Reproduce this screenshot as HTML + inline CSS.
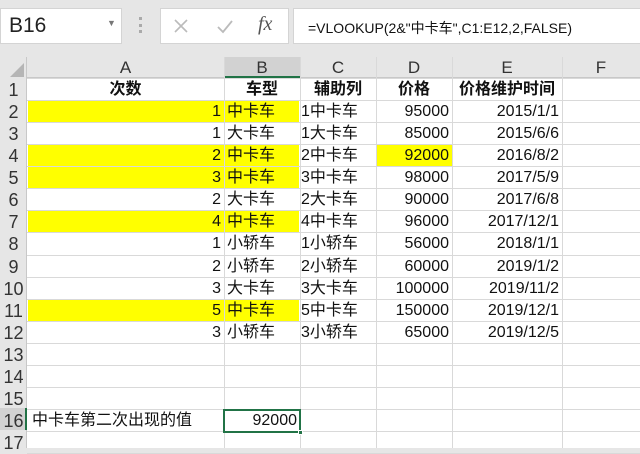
<!DOCTYPE html>
<html><head><meta charset="utf-8"><style>
*{margin:0;padding:0;box-sizing:border-box}
body{width:640px;height:448px;overflow:hidden;background:#e6e6e6;font-family:"Liberation Sans","Noto Sans CJK SC",sans-serif;position:relative}
.box{position:absolute;background:#fff;border:1px solid #d4d4d4}
.cell{position:absolute;height:22px;font-size:16px;line-height:22px;white-space:nowrap;color:#111;padding:0 3px}
.r{text-align:right}.c{text-align:center}
.hl{position:absolute;background:#c8c8c8}
</style></head><body>
<div class="box" style="left:0;top:8px;width:122px;height:36px"><span style="position:absolute;left:8px;top:5px;font-size:21px;color:#222">B16</span><span style="position:absolute;left:106px;top:9px;font-size:9px;color:#777">▼</span></div>
<div style="position:absolute;left:139px;top:17px;width:3px;height:16px;border-left:3px dotted #aaa"></div>
<div class="box" style="left:160px;top:8px;width:129px;height:36px">
<svg style="position:absolute;left:12px;top:9px" width="16" height="16"><path d="M2 2L14 14M14 2L2 14" stroke="#bbb" stroke-width="1.6"/></svg>
<svg style="position:absolute;left:55px;top:9px" width="18" height="16"><path d="M2 9L7 14L16 3" stroke="#bbb" stroke-width="1.8" fill="none"/></svg>
<span style="position:absolute;left:97px;top:4px;font-size:20px;font-style:italic;font-family:'Liberation Serif',serif;color:#555">fx</span></div>
<div class="box" style="left:293px;top:8px;width:360px;height:36px"><span style="position:absolute;left:14px;top:9px;font-size:14px;color:#111">=VLOOKUP(2&amp;"中卡车",C1:E12,2,FALSE)</span></div>
<div style="position:absolute;left:0;top:57px;width:640px;height:391px;background:#fff"></div>
<div style="position:absolute;left:0;top:57px;width:640px;height:21px;background:#e6e6e6;border-bottom:1px solid #c8c8c8"></div>
<div style="position:absolute;left:0;top:57px;width:27px;height:391px;background:#e6e6e6;border-right:1px solid #c8c8c8"></div>
<div style="position:absolute;left:224px;top:57px;width:76px;height:21px;background:#d2d2d2;border-bottom:2px solid #217346"></div>
<div style="position:absolute;left:0;top:408px;width:27px;height:22px;background:#d2d2d2;border-right:2px solid #217346"></div>
<div style="position:absolute;left:10px;top:63px;width:0;height:0;border-left:14px solid transparent;border-bottom:14px solid #b5b5b5"></div>
<div id="g"></div>
<script>
var cols=[[27,224,'A'],[224,300,'B'],[300,376,'C'],[376,452,'D'],[452,562,'E'],[562,640,'F']];
var h='';
var rows=[
['次数','车型','辅助列','价格','价格维护时间'],
['1','中卡车','1中卡车','95000','2015/1/1',1],
['1','大卡车','1大卡车','85000','2015/6/6'],
['2','中卡车','2中卡车','92000','2016/8/2',1,1],
['3','中卡车','3中卡车','98000','2017/5/9',1],
['2','大卡车','2大卡车','90000','2017/6/8'],
['4','中卡车','4中卡车','96000','2017/12/1',1],
['1','小轿车','1小轿车','56000','2018/1/1'],
['2','小轿车','2小轿车','60000','2019/1/2'],
['3','大卡车','3大卡车','100000','2019/11/2'],
['5','中卡车','5中卡车','150000','2019/12/1',1],
['3','小轿车','3小轿车','65000','2019/12/5']];
function rt(i){return 78+i*22.07;}
rows.forEach(function(r,i){var t=rt(i);
 if(r[5]) h+='<div style="position:absolute;left:28px;top:'+(t+1)+'px;width:271px;height:21px;background:#ff0"></div>';
 if(r[6]) h+='<div style="position:absolute;left:377px;top:'+(t+1)+'px;width:75px;height:21px;background:#ff0"></div>';
});
for(var i=0;i<=17;i++){var t=rt(i);h+='<div class="hl" style="left:27px;top:'+t+'px;width:613px;height:1px;background:#d9d9d9"></div>';}
cols.forEach(function(c){h+='<div class="hl" style="left:'+c[1]+'px;top:57px;width:1px;height:391px;background:#d9d9d9"></div>';
 h+='<div class="cell c" style="left:'+c[0]+'px;top:57px;width:'+(c[1]-c[0])+'px;color:#333;font-size:17px">'+c[2]+'</div>';});
for(var i=0;i<17;i++){h+='<div class="cell c" style="left:0;top:'+(rt(i)+1)+'px;width:27px;font-size:18px;color:#333;padding:0">'+(i+1)+'</div>';}
rows.forEach(function(r,i){var t=rt(i)+1;
 if(i==0){[['次数',0],['车型',1],['辅助列',2],['价格',3],['价格维护时间',4]].forEach(function(x){var c=cols[x[1]];h+='<div class="cell c" style="left:'+c[0]+'px;top:'+t+'px;width:'+(c[1]-c[0])+'px;font-weight:bold;padding:0">'+x[0]+'</div>';});return;}
 h+='<div class="cell r" style="left:27px;top:'+t+'px;width:197px">'+r[0]+'</div>';
 h+='<div class="cell" style="left:224px;top:'+t+'px;width:76px">'+r[1]+'</div>';
 h+='<div class="cell" style="left:300px;top:'+t+'px;width:76px;padding-left:1px">'+r[2]+'</div>';
 h+='<div class="cell r" style="left:376px;top:'+t+'px;width:76px">'+r[3]+'</div>';
 h+='<div class="cell r" style="left:452px;top:'+t+'px;width:110px">'+r[4]+'</div>';
});
var t=rt(15)+1;
h+='<div class="cell" style="left:29px;top:'+t+'px">中卡车第二次出现的值</div>';
h+='<div style="position:absolute;left:223px;top:'+(t-1)+'px;width:78px;height:24px;border:2px solid #217346"></div>';
h+='<div style="position:absolute;left:298px;top:'+(t+20)+'px;width:5px;height:5px;background:#217346;border:1px solid #fff"></div>';
h+='<div class="cell r" style="left:224px;top:'+t+'px;width:76px">92000</div>';
document.getElementById('g').innerHTML=h;
</script>
</body></html>
